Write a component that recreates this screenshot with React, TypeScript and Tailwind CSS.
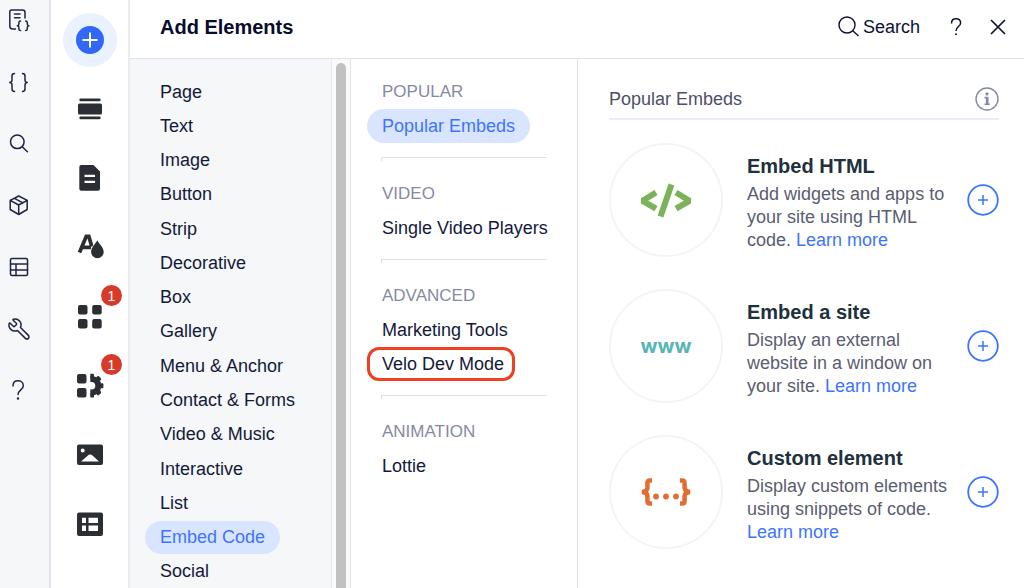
import React from 'react';
import { Wrench } from 'lucide-react';

interface IconButton {
  label: string;
  icon: React.ReactNode;
  badge?: number;
}

interface Section {
  title: string;
  items: string[];
}

interface Embed {
  title: string;
  text: string;
  logo: React.ReactNode;
}

const LineIcon = ({ children }: { children: React.ReactNode }) => (
  <svg
    width="24"
    height="24"
    viewBox="0 0 24 24"
    fill="none"
    stroke="currentColor"
    strokeWidth="1.5"
    strokeLinecap="round"
    strokeLinejoin="round"
    className="overflow-visible"
  >
    {children}
  </svg>
);

const SolidIcon = ({ children }: { children: React.ReactNode }) => (
  <svg width="28" height="28" viewBox="0 0 28 28" fill="currentColor">
    {children}
  </svg>
);

const devTools: IconButton[] = [
  {
    label: 'Page code',
    icon: (
      <LineIcon>
        <path d="M8.500 22H5.800a3 3 0 0 1-3-3V4.800A1.800 1.800 0 0 1 4.600 3H15.500A2.500 2.500 0 0 1 18 5.500V11" />
        <path d="M7.500 7h5.500M7.500 10.800h5.500" />
        <path d="M13.600 14c-1.300 0-1.700.5-1.700 1.600v1.500c0 1-.5 1.600-1.600 1.700 1.100.1 1.600.7 1.600 1.700V22c0 1.100.4 1.600 1.700 1.600M18.600 14c1.300 0 1.700.5 1.700 1.600v1.500c0 1 .5 1.600 1.600 1.700-1.100.1-1.600.7-1.600 1.700V22c0 1.100-.4 1.600-1.700 1.600" />
      </LineIcon>
    ),
  },
  {
    label: 'Public and backend',
    icon: (
      <LineIcon>
        <path d="M7.500 4.500c-2 0-2.500.8-2.500 2.400v4c0 1.600-.7 2.400-2.200 2.600 1.500.2 2.200 1 2.200 2.600v4c0 1.600.5 2.400 2.500 2.400M15.500 4.500c2 0 2.500.8 2.500 2.400v4c0 1.600.7 2.400 2.200 2.600-1.500.2-2.200 1-2.200 2.600v4c0 1.600-.5 2.400-2.500 2.400" />
      </LineIcon>
    ),
  },
  {
    label: 'Search code',
    icon: (
      <LineIcon>
        <circle cx="10.300" cy="10.800" r="6.800" />
        <path d="M15.200 15.800l5.200 5" />
      </LineIcon>
    ),
  },
  {
    label: 'Packages',
    icon: (
      <LineIcon>
        <path d="M11.700 3l8.500 4.300v9.200l-8.500 5-8.500-5V7.300zM3.200 7.300l8.500 4.700 8.500-4.700M11.700 12v9.500M7.400 5.300l8.500 4.600" />
      </LineIcon>
    ),
  },
  {
    label: 'Databases',
    icon: (
      <LineIcon>
        <rect x="3.500" y="3.500" width="17" height="17" rx="1.500" />
        <path d="M3.500 9h17M3.500 15h17M9 9v11.500" />
      </LineIcon>
    ),
  },
  {
    label: 'Developer tools',
    icon: <Wrench size={24} strokeWidth={1.5} className="-scale-x-100" />,
  },
  {
    label: 'Help',
    icon: (
      <LineIcon>
        <path d="M6 7c0-3.500 2.200-5.200 5-5.200s5.300 1.800 5.300 4.900c0 4.300-5.200 4.200-5.200 8.800" />
        <circle cx="11" cy="19.500" r=".5" fill="currentColor" />
      </LineIcon>
    ),
  },
];

const GEAR_TEETH = [-90, -45, 0, 45, 90];

const editorTools: IconButton[] = [
  {
    label: 'Sections',
    icon: (
      <SolidIcon>
        <rect x="3.500" y="3.500" width="21" height="2.800" rx=".8" />
        <rect x="2" y="8.500" width="24" height="11" rx="1.500" />
        <rect x="3.500" y="21.500" width="21" height="2.800" rx=".8" />
      </SolidIcon>
    ),
  },
  {
    label: 'Pages',
    icon: (
      <SolidIcon>
        <path
          fillRule="evenodd"
          d="M5.300 1h12.200L24 7.500v17.200a2 2 0 0 1-2 2H5.300a2 2 0 0 1-2-2V3a2 2 0 0 1 2-2zM8.500 10.700v2.200h10.500v-2.200zM8.500 16.800V19h10.500v-2.200z"
        />
      </SolidIcon>
    ),
  },
  {
    label: 'Site design',
    icon: (
      <SolidIcon>
        <path d="M3.500 19.500L10.300 3.300h2.500l3 10.200M6 14.300h9" fill="none" stroke="currentColor" strokeWidth="3.800" />
        <path
          d="M21.300 7.300c-1.500 3.400-6.200 7-6.200 11.600a6.300 6.300 0 0 0 12.600 0c0-4.600-5-8.200-6.400-11.600z"
          stroke="#fff"
          strokeWidth="1.400"
          paintOrder="stroke"
        />
      </SolidIcon>
    ),
  },
  {
    label: 'Add apps',
    badge: 1,
    icon: (
      <SolidIcon>
        <rect x="2" y="3" width="9.500" height="9.500" rx="2" />
        <rect x="16.200" y="3" width="9.500" height="9.500" rx="2" />
        <rect x="2" y="17" width="9.500" height="9.500" rx="2" />
        <rect x="16.200" y="17" width="9.500" height="9.500" rx="2" />
      </SolidIcon>
    ),
  },
  {
    label: 'Manage apps',
    badge: 1,
    icon: (
      <SolidIcon>
        <rect x="1" y="3" width="9.500" height="9.500" rx="2" />
        <rect x="1" y="17" width="9.500" height="9.500" rx="2" />
        <clipPath id="gear-half">
          <rect x="14.300" y="0" width="14" height="28" />
        </clipPath>
        <g clipPath="url(#gear-half)">
          <circle cx="15.500" cy="14.700" r="6.800" fill="none" stroke="currentColor" strokeWidth="6" />
          {GEAR_TEETH.map((angle) => (
            <rect
              key={angle}
              x="23"
              y="12.200"
              width="4.400"
              height="5"
              rx="1.200"
              transform={`rotate(${angle} 15.500 14.700)`}
            />
          ))}
        </g>
      </SolidIcon>
    ),
  },
  {
    label: 'Media',
    icon: (
      <SolidIcon>
        <path
          fillRule="evenodd"
          d="M3 4.500h22a2 2 0 0 1 2 2V23a2 2 0 0 1-2 2H3a2 2 0 0 1-2-2V6.500a2 2 0 0 1 2-2zM6.700 8.600a2 2 0 1 0 0 4 2 2 0 0 0 0-4zM5 21.500h18l-6-5.600a4 4 0 0 0-5.600 0z"
        />
      </SolidIcon>
    ),
  },
  {
    label: 'Content manager',
    icon: (
      <SolidIcon>
        <path
          fillRule="evenodd"
          d="M3 3.500h22a2 2 0 0 1 2 2V25a2 2 0 0 1-2 2H3a2 2 0 0 1-2-2V5.500a2 2 0 0 1 2-2zM6 8.700v5.400h4V8.700zM12.500 8.700v5.400H22V8.700zM6 16.500v5.400h4v-5.400zM12.500 16.500v5.400H22v-5.400z"
        />
      </SolidIcon>
    ),
  },
];

const categories = [
  'Page',
  'Text',
  'Image',
  'Button',
  'Strip',
  'Decorative',
  'Box',
  'Gallery',
  'Menu & Anchor',
  'Contact & Forms',
  'Video & Music',
  'Interactive',
  'List',
  'Embed Code',
  'Social',
];

const sections: Section[] = [
  { title: 'POPULAR', items: ['Popular Embeds'] },
  { title: 'VIDEO', items: ['Single Video Players'] },
  { title: 'ADVANCED', items: ['Marketing Tools', 'Velo Dev Mode'] },
  { title: 'ANIMATION', items: ['Lottie'] },
];

const embeds: Embed[] = [
  {
    title: 'Embed HTML',
    text: 'Add widgets and apps to your site using HTML code.',
    logo: (
      <svg width="56" height="36" viewBox="0 0 56 36" fill="none" stroke="#7bb35b" strokeWidth="6">
        <path d="M18 10.500L4.500 18.800l13.500 7.800M38 10.500l13.500 8.300L38 26.600" strokeLinejoin="bevel" />
        <path d="M33.500 2.500L22.500 34.500" />
      </svg>
    ),
  },
  {
    title: 'Embed a site',
    text: 'Display an external website in a window on your site.',
    logo: <span className="font-[Inter] text-xl font-bold text-[#56b5b5]">www</span>,
  },
  {
    title: 'Custom element',
    text: 'Display custom elements using snippets of code.',
    logo: (
      <svg width="52" height="32" viewBox="0 0 52 32" fill="none" stroke="#e46c33" strokeWidth="4.500">
        <path d="M12 4.500h-2c-1.800 0-2.600.9-2.600 2.600v5c0 2-1.500 3.400-5.400 3.900 3.900.5 5.400 1.900 5.400 3.900v5c0 1.700.8 2.600 2.600 2.600h2M40 4.500h2c1.800 0 2.600.9 2.600 2.600v5c0 2 1.500 3.400 5.400 3.900-3.900.5-5.400 1.900-5.400 3.900v5c0 1.700-.8 2.600-2.600 2.600h-2" />
        <g fill="#e46c33" stroke="none">
          <circle cx="16" cy="20.500" r="2.900" />
          <circle cx="26" cy="20.500" r="2.900" />
          <circle cx="36" cy="20.500" r="2.900" />
        </g>
      </svg>
    ),
  },
];

const DevRail = () => (
  <nav className="flex w-[51px] shrink-0 flex-col items-start gap-[38px] border-r-2 border-[#dfe5eb] bg-[#f5f7f8] pt-[7px] pl-[7px] text-[#1f2445]">
    {devTools.map((tool) => (
      <button key={tool.label} aria-label={tool.label} className="size-6">
        {tool.icon}
      </button>
    ))}
  </nav>
);

const EditorRail = () => (
  <nav className="flex w-[79px] shrink-0 flex-col border-r-2 border-[#e8ecf1] pt-[5px] text-[#2b2e33]">
    <button aria-label="Add elements" className="flex h-[69px] items-center justify-center">
      <span className="flex size-[54px] items-center justify-center rounded-full bg-[#eaf1ff]">
        <svg width="28" height="28" viewBox="0 0 28 28">
          <circle cx="14" cy="14" r="14" fill="#3368f6" />
          <path d="M14 6.500v15M6.500 14h15" stroke="#fff" strokeWidth="2" />
        </svg>
      </span>
    </button>
    {editorTools.map((tool) => (
      <button key={tool.label} aria-label={tool.label} className="relative flex h-[69px] items-center justify-center">
        {tool.icon}
        {tool.badge && (
          <span className="absolute top-1 right-1.5 flex size-[21px] items-center justify-center rounded-full bg-[#d63a29] text-sm text-white">
            {tool.badge}
          </span>
        )}
      </button>
    ))}
  </nav>
);

const PanelHeader = () => (
  <header className="flex h-[59px] shrink-0 items-center border-b border-[#dfe3ec] pr-4 pb-1 pl-[30px] text-[#0d1233]">
    <h1 className="flex-1 text-xl font-bold text-[#060c2c]">Add Elements</h1>
    <button className="flex items-center gap-1 text-lg">
      <svg width="22" height="22" viewBox="0 0 22 22" fill="none" stroke="currentColor" strokeWidth="1.400">
        <circle cx="10" cy="9" r="8" />
        <path d="M15.700 14.700l5.800 5.300" />
      </svg>
      Search
    </button>
    <button aria-label="Help" className="ml-7">
      <svg width="16" height="20" viewBox="0 0 16 20" fill="none" stroke="currentColor" strokeWidth="1.500">
        <path d="M3.500 6.500c0-3 1.900-4.700 4.500-4.700s4.600 1.500 4.600 4.100c0 3.600-4.600 3.600-4.600 8" />
        <circle cx="8" cy="17.300" r="1" fill="currentColor" stroke="none" />
      </svg>
    </button>
    <button aria-label="Close" className="ml-6">
      <svg width="20" height="20" viewBox="0 0 20 20" fill="none" stroke="currentColor" strokeWidth="1.700">
        <path d="M3 3l14 14M17 3L3 17" />
      </svg>
    </button>
  </header>
);

const CategoryList = () => (
  <div className="flex w-[221px] shrink-0 border-r border-[#dde3ea]">
    <ul className="flex flex-1 flex-col justify-between bg-[#f5f7f8] pt-4 pl-[15px]">
      {categories.map((name) => (
        <li key={name} className="flex">
          <button
            className={`h-[33px] rounded-full px-[15px] text-lg ${
              name === 'Embed Code' ? 'bg-[#d9e4ff] text-[#3d74ff]' : 'text-[#14193a]'
            }`}
          >
            {name}
          </button>
        </li>
      ))}
    </ul>
    <div className="flex w-[19px] justify-center border-l border-[#e5e9ef] bg-[#fafafa] pt-1">
      <div className="w-2.5 rounded-t-full bg-[#c1c1c1]" />
    </div>
  </div>
);

const itemStyle = (name: string) => {
  if (name === 'Popular Embeds') return 'bg-[#d9e4ff] px-[15px] text-[#3d74ff] rounded-full';
  if (name === 'Velo Dev Mode') return 'border-[3px] border-[#ee4023] pl-3 pr-2 rounded-xl text-[#14193a]';
  return 'px-[15px] text-[#14193a]';
};

const SectionList = () => (
  <div className="w-[227px] shrink-0 border-r border-[#dde3ea] pt-4">
    {sections.map((section, i) => (
      <section key={section.title}>
        {i > 0 && <hr className="mt-3.5 mr-[30px] mb-4 ml-[30px] h-1 border-t border-l border-[#dfe0e2]" />}
        <h2 className="flex h-[34px] items-center pl-[31px] text-[17px] text-[#868aa5]">{section.title}</h2>
        {section.items.map((name) => (
          <div key={name} className="flex pl-4">
            <button className={`h-[34px] text-lg whitespace-nowrap ${itemStyle(name)}`}>{name}</button>
          </div>
        ))}
      </section>
    ))}
  </div>
);

const EmbedCard = ({ title, text, logo }: Embed) => (
  <article className="flex h-[114px] items-center">
    <div className="flex size-[114px] shrink-0 items-center justify-center rounded-full border-2 border-[#f3f5f5]">
      {logo}
    </div>
    <div className="ml-6 flex-1 pt-[3px]">
      <h3 className="text-xl font-bold text-[#20303c]">{title}</h3>
      <p className="mt-[3px] text-lg leading-[23px] text-[#595d70]">
        {text}{' '}
        <a href="#" className="whitespace-nowrap text-[#3d74ff]">
          Learn more
        </a>
      </p>
    </div>
    <button aria-label={`Add ${title}`} className="ml-3 shrink-0">
      <svg width="32" height="32" viewBox="0 0 32 32" fill="none" stroke="#3d74ff" strokeWidth="1.800">
        <circle cx="16" cy="16" r="14.800" />
        <path d="M16 11v10M11 16h10" strokeWidth="1.500" />
      </svg>
    </button>
  </article>
);

const EmbedPanel = () => (
  <main className="min-w-0 flex-1 pt-5 pr-[25px] pl-[31px]">
    <div className="flex h-[41px] items-center justify-between border-b-2 border-[#e6edf4]">
      <h2 className="text-lg text-[#4c5068]">Popular Embeds</h2>
      <button aria-label="About popular embeds" className="text-[#868aa5]">
        <svg width="24" height="24" viewBox="0 0 24 24">
          <circle cx="12" cy="12" r="11" fill="none" stroke="currentColor" strokeWidth="1.400" />
          <circle cx="12" cy="6.900" r="1.600" fill="currentColor" />
          <path d="M9.500 9.800h4v6.700h1.300v1.600H9.500v-1.600h1.400v-5.100H9.500z" fill="currentColor" />
        </svg>
      </button>
    </div>
    <div className="mt-[23px] flex flex-col gap-8">
      {embeds.map((embed) => (
        <EmbedCard key={embed.title} {...embed} />
      ))}
    </div>
  </main>
);

const App: React.FC = () => {
  return (
    <div className="flex h-screen overflow-hidden bg-white font-['Liberation_Sans',sans-serif]">
      <DevRail />
      <EditorRail />
      <div className="flex min-w-0 flex-1 flex-col">
        <PanelHeader />
        <div className="flex min-h-0 flex-1">
          <CategoryList />
          <SectionList />
          <EmbedPanel />
        </div>
      </div>
    </div>
  );
};

export default App;
